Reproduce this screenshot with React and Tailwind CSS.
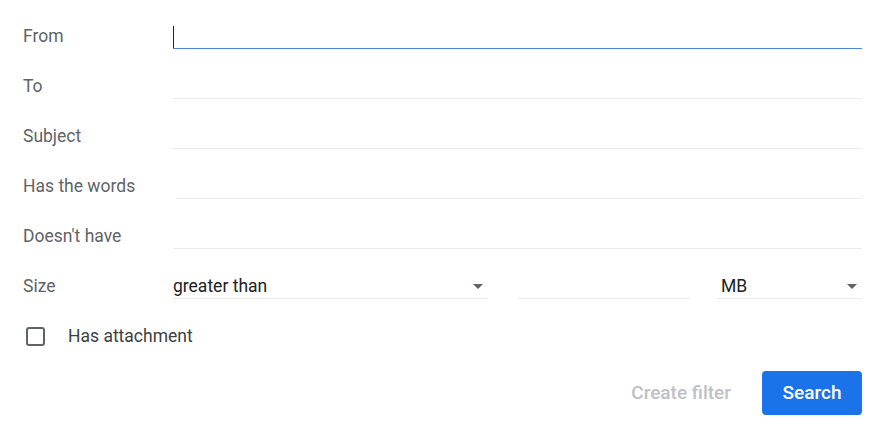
const font = { fontFamily: "Roboto, 'Noto Sans', Arial, sans-serif" };

function Caret() {
  return (
    <svg width="10" height="5" viewBox="0 0 10 5" className="shrink-0">
      <path d="M0 0h10L5 5z" fill="#5f6368" />
    </svg>
  );
}

function Row({ label, children }) {
  return (
    <div className="flex items-center h-[25px]">
      <div className="w-[150px] shrink-0 text-[17.5px] text-[#5f6368]">{label}</div>
      {children}
    </div>
  );
}

function TextField({ focused, className = "" }) {
  return (
    <div
      className={`flex-1 h-[25px] flex items-center border-b ${
        focused ? "border-[#4a85e0]" : "border-[#e8eaed]"
      } ${className}`}
    >
      {focused && <span className="w-px h-[22px] bg-[#202124] mt-[1px]" />}
    </div>
  );
}

export default function App() {
  return (
    <div className="w-[887px] h-[437px] bg-white pl-[23px] pr-[25px] pt-[24px]" style={font}>
      <div className="flex flex-col gap-[25px]">
        <Row label="From">
          <TextField focused />
        </Row>
        <Row label="To">
          <TextField />
        </Row>
        <Row label="Subject">
          <TextField />
        </Row>
        <Row label="Has the words">
          <TextField className="ml-[3px]" />
        </Row>
        <Row label="Doesn't have">
          <TextField />
        </Row>
        <Row label="Size">
          <div className="w-[315px] h-[25px] flex items-center justify-between border-b border-[#e8eaed] pr-[5px]">
            <span className="text-[17.5px] text-[#202124]">greater than</span>
            <Caret />
          </div>
          <div className="w-[172px] h-[25px] ml-[30px] border-b border-[#e8eaed]" />
          <div className="flex-1 h-[25px] ml-[27px] flex items-center justify-between border-b border-[#e8eaed] pl-[4px] pr-[5px]">
            <span className="text-[17.5px] text-[#202124]">MB</span>
            <Caret />
          </div>
        </Row>
        <div className="flex items-center h-[25px]">
          <div className="w-[19px] h-[19px] ml-[3px] border-2 border-[#5f6368] rounded-[3px]" />
          <span className="ml-[23px] text-[17.5px] text-[#3c4043]">Has attachment</span>
        </div>
      </div>
      <div className="flex items-center justify-end mt-[22px]">
        <button className="text-[19px] font-medium text-[#bdc1c6] mr-[31px]">Create filter</button>
        <button className="w-[100px] h-[44px] rounded-[4px] bg-[#1a73e8] text-white text-[19px] font-medium">
          Search
        </button>
      </div>
    </div>
  );
}
